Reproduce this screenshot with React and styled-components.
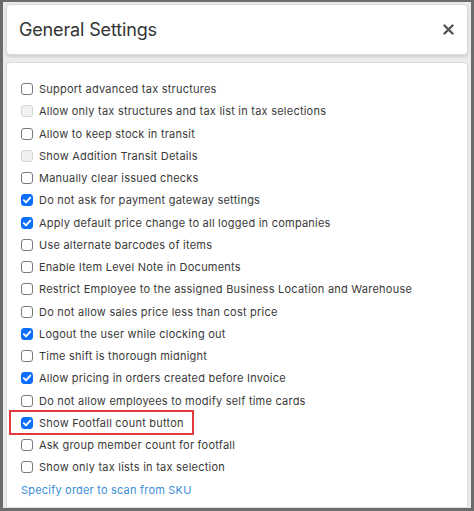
import React from 'react'
import styled, { createGlobalStyle } from 'styled-components'

const GlobalStyle = createGlobalStyle`
  html, body { margin: 0; padding: 0; background: #ebebeb; }
  * { box-sizing: border-box; }
`

const settings = [
  { label: 'Support advanced tax structures' },
  { label: 'Allow only tax structures and tax list in tax selections', disabled: true },
  { label: 'Allow to keep stock in transit' },
  { label: 'Show Addition Transit Details', disabled: true },
  { label: 'Manually clear issued checks' },
  { label: 'Do not ask for payment gateway settings', checked: true },
  { label: 'Apply default price change to all logged in companies', checked: true },
  { label: 'Use alternate barcodes of items' },
  { label: 'Enable Item Level Note in Documents' },
  { label: 'Restrict Employee to the assigned Business Location and Warehouse' },
  { label: 'Do not allow sales price less than cost price' },
  { label: 'Logout the user while clocking out', checked: true },
  { label: 'Time shift is thorough midnight' },
  { label: 'Allow pricing in orders created before Invoice', checked: true },
  { label: 'Do not allow employees to modify self time cards' },
  { label: 'Show Footfall count button', checked: true, highlight: true },
  { label: 'Ask group member count for footfall' },
  { label: 'Show only tax lists in tax selection' },
]

export default function App() {
  return (
    <>
      <GlobalStyle />
      <Frame>
        <Header>
          <Title>General Settings</Title>
          <CloseButton aria-label="close">
            <svg width="11" height="11" viewBox="0 0 11 11">
              <path d="M1.5 1.5 L9.5 9.5 M9.5 1.5 L1.5 9.5" stroke="#555" strokeWidth="2.4" strokeLinecap="round" />
            </svg>
          </CloseButton>
        </Header>
        <Body>
          {settings.map((s, i) => (
            <Row key={i} $highlight={s.highlight}>
              <Box $checked={s.checked} $disabled={s.disabled}>
                {s.checked && (
                  <svg width="10" height="10" viewBox="0 0 10 10">
                    <path d="M1.8 5.2 L4 7.4 L8.3 2.6" stroke="#fff" strokeWidth="1.9" fill="none" strokeLinecap="round" strokeLinejoin="round" />
                  </svg>
                )}
              </Box>
              <Label>{s.label}</Label>
            </Row>
          ))}
          <Link>Specify order to scan from SKU</Link>
        </Body>
      </Frame>
    </>
  )
}

const Frame = styled.div`
  height: 511px;
  border-style: solid;
  border-color: #6c6c6c;
  border-width: 2px 3px 3px 3px;
  padding: 2px 3px 0 3px;
  display: flex;
  flex-direction: column;
  gap: 7px;
  font-family: Inter, "Liberation Sans", sans-serif;
  overflow: hidden;
`

const Header = styled.div`
  height: 51px;
  flex: none;
  background: #fff;
  border: 1px solid #dcdcdc;
  border-radius: 4px;
  box-shadow: 0 2px 3px rgba(0, 0, 0, 0.12);
  display: flex;
  align-items: center;
  justify-content: space-between;
  padding: 0 13px 0 12px;
`

const Title = styled.h2`
  margin: 0;
  font-size: 18px;
  font-weight: 400;
  color: #333;
  letter-spacing: -0.15px;
`

const CloseButton = styled.div`
  display: flex;
  width: 11px;
  height: 11px;
`

const Body = styled.div`
  flex: 1;
  background: #fff;
  border: 1px solid #dcdcdc;
  border-radius: 4px 4px 0 0;
  padding: 15px 14px 0 14px;
  display: flex;
  flex-direction: column;
`

const Row = styled.div`
  height: 22.25px;
  display: flex;
  align-items: center;
  gap: 6px;
  align-self: flex-start;
  position: relative;
  &::after {
    content: '';
    display: ${(p) => (p.$highlight ? 'block' : 'none')};
    position: absolute;
    left: -12px;
    right: -10px;
    top: -2px;
    bottom: -1px;
    border: 2px solid #e0393e;
  }
`

const Box = styled.span`
  width: 12px;
  height: 12px;
  flex: none;
  border-radius: 3px;
  border: 1px solid ${(p) => (p.$checked ? '#0b6efd' : p.$disabled ? '#d4d4d4' : '#7a7a7a')};
  background: ${(p) => (p.$checked ? '#0b6efd' : p.$disabled ? '#f1f1f1' : '#fff')};
  display: flex;
  align-items: center;
  justify-content: center;
`

const Label = styled.span`
  font-size: 11px;
  color: #3a3a3a;
  letter-spacing: 0.23px;
  white-space: nowrap;
`

const Link = styled.a`
  height: 22.25px;
  display: flex;
  align-items: center;
  font-size: 11px;
  color: #3b8ed8;
  letter-spacing: 0.2px;
  cursor: pointer;
`
